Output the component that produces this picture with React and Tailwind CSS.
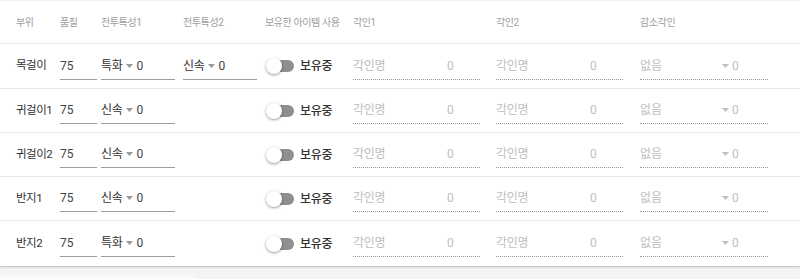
import React from 'react';

const rows = [
  { part: '목걸이', q: '75', s1: '특화', s2: '신속', h: 'h-[45px]' },
  { part: '귀걸이1', q: '75', s1: '신속', h: 'h-[44px]' },
  { part: '귀걸이2', q: '75', s1: '신속', h: 'h-[44px]' },
  { part: '반지1', q: '75', s1: '신속', h: 'h-[44px]' },
  { part: '반지2', q: '75', s1: '특화', h: 'h-[45px]' },
];

const font = { fontFamily: 'Roboto, "Noto Sans CJK KR", sans-serif' };

const Caret = ({ light }) => (
  <svg width="7" height="4" viewBox="0 0 7 4" className="mr-[3px]">
    <path d="M0 0h7L3.5 4z" fill={light ? '#bdbdbd' : '#999999'} />
  </svg>
);

const Stat = ({ name }) => (
  <div className="w-[74px] h-[27px] flex items-center border-b border-[#9e9e9e] text-[12px] tracking-[-0.3px] text-[#333]">
    <span className="mr-[4px]">{name}</span>
    <Caret />
    <span className="text-[#444]">0</span>
  </div>
);

const Toggle = () => (
  <div className="relative w-[28px] h-[16px] flex items-center">
    <div className="ml-[6px] w-[22px] h-[12px] rounded-full bg-[#8f8f8f]" />
    <div className="absolute left-0 top-0 w-[16px] h-[16px] rounded-full bg-white shadow-[0_1px_3px_rgba(0,0,0,0.4)]" />
  </div>
);

const Engrave = () => (
  <div className="w-[127px] h-[27px] flex items-center border-b border-dotted border-[#9e9e9e] text-[12px] tracking-[-0.3px] text-[#bdbdbd]">
    <span className="flex-1">각인명</span>
    <span className="w-[33px]">0</span>
  </div>
);

export default function App() {
  return (
    <div className="w-[800px] h-[279px] bg-[#f5f5f5] overflow-hidden" style={font}>
      <div className="bg-white border-t border-[#f0f0f0] border-b border-b-[#c8c8c8] shadow-[0_1px_2px_rgba(0,0,0,0.1)]">
        <div className="h-[43px] flex items-center text-[10px] tracking-[-0.4px] text-[#9e9e9e] border-b border-[#e8e8e8]">
          <div className="w-[60px] pl-4">부위</div>
          <div className="w-[41px]">품질</div>
          <div className="w-[82px]">전투특성1</div>
          <div className="w-[82px]">전투특성2</div>
          <div className="w-[88px]">보유한 아이템 사용</div>
          <div className="w-[143px]">각인1</div>
          <div className="w-[144px]">각인2</div>
          <div>감소각인</div>
        </div>
        {rows.map((r, i) => (
          <div
            key={r.part}
            className={`${r.h} flex items-center ${i < rows.length - 1 ? 'border-b border-[#e8e8e8]' : ''}`}
          >
            <div className="w-[60px] pl-4 text-[11.5px] tracking-[-0.5px] text-[#333] whitespace-nowrap">{r.part}</div>
            <div className="w-[41px]">
              <div className="w-[37px] h-[27px] flex items-center border-b border-[#9e9e9e] text-[12px] text-[#444]">
                {r.q}
              </div>
            </div>
            <div className="w-[82px]">
              <Stat name={r.s1} />
            </div>
            <div className="w-[82px]">{r.s2 && <Stat name={r.s2} />}</div>
            <div className="w-[88px] flex items-center gap-[6px] pl-px">
              <Toggle />
              <span className="text-[12px] tracking-[-0.3px] text-[#333] font-medium">보유중</span>
            </div>
            <div className="w-[143px]">
              <Engrave />
            </div>
            <div className="w-[144px]">
              <Engrave />
            </div>
            <div className="w-[128px] h-[27px] flex items-center border-b border-dotted border-[#9e9e9e] text-[12px] text-[#bdbdbd]">
              <span className="w-[82px]">없음</span>
              <Caret light />
              <span>0</span>
            </div>
          </div>
        ))}
      </div>
      <div className="mt-[9px] w-[195px] h-[10px] bg-[#fafafa]" />
    </div>
  );
}
